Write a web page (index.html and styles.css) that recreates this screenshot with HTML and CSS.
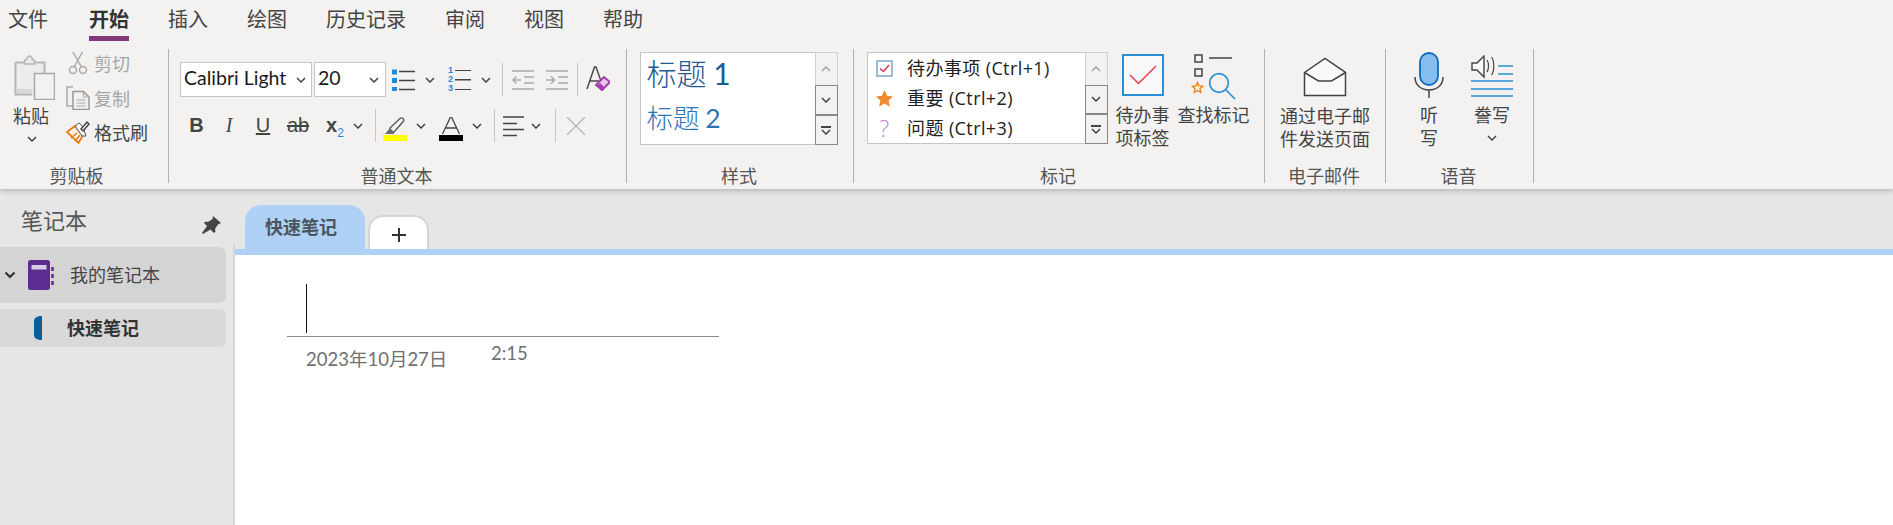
FILE: index.html
```html
<!DOCTYPE html>
<html lang="zh-CN">
<head>
<meta charset="utf-8">
<title>OneNote</title>
<link rel="stylesheet" href="styles.css">
</head>
<body>
<svg class="defs" width="0" height="0" aria-hidden="true">
  <defs>
    <symbol id="chev" viewBox="0 0 10 6"><polyline points="1,1 5,5 9,1" fill="none" stroke="#444" stroke-width="1.5"/></symbol>
    <symbol id="chev-bold" viewBox="0 0 12 8"><polyline points="1.500,1.500 6,6 10.500,1.500" fill="none" stroke="#333" stroke-width="2.200"/></symbol>
  </defs>
</svg>
<header class="top">
  <nav class="menu">
    <span class="menu-item first">文件</span>
    <span class="menu-item active">开始</span>
    <span class="menu-item">插入</span>
    <span class="menu-item">绘图</span>
    <span class="menu-item">历史记录</span>
    <span class="menu-item">审阅</span>
    <span class="menu-item">视图</span>
    <span class="menu-item">帮助</span>
  </nav>
  <div class="ribbon">
    <section class="group g-clip">
      <div class="content clip">
        <div class="paste">
          <svg class="paste-icon" width="41" height="45" viewBox="0 0 41 45">
            <rect x="2.500" y="8.500" width="27" height="30" fill="#ececec"/>
            <path d="M1.500 7.500h9.500M20.500 7.500h10v11M1.500 7.500v32h17" fill="none" stroke="#b5b5b5" stroke-width="2"/>
            <path d="M10.500 9V6c0-1 1-1.500 2-1.500 .5-2 1.500-3.500 3-3.500s2.500 1.500 3 3.500c1 0 2 .5 2 1.500v3z" fill="#ececec" stroke="#b5b5b5" stroke-width="1.500"/>
            <rect x="20.500" y="18.500" width="20" height="26" fill="#f3f2f1" stroke="#a8a8a8" stroke-width="1.500"/>
            <rect x="3" y="34" width="15" height="4" fill="#d8d8d8"/>
          </svg>
          <span class="paste-text">粘贴</span>
          <svg class="chev paste-chev"><use href="#chev"/></svg>
        </div>
        <div class="clip-list">
          <div class="clip-row disabled">
            <svg class="clip-icon" width="24" height="24" viewBox="0 0 24 24">
              <path d="M7 1l8.500 15M16.500 1L8 16" fill="none" stroke="#aaa" stroke-width="1.500"/>
              <circle cx="7" cy="19" r="3.500" fill="none" stroke="#aaa" stroke-width="1.500"/>
              <circle cx="17" cy="19" r="3.500" fill="none" stroke="#aaa" stroke-width="1.500"/>
            </svg>
            <span>剪切</span>
          </div>
          <div class="clip-row disabled">
            <svg class="clip-icon" width="24" height="24" viewBox="0 0 24 24">
              <path d="M7 1H1v19h6" fill="none" stroke="#aaa" stroke-width="1.500"/>
              <path d="M7 5.500v18h16V11l-5.500-5.500z" fill="#f3f2f1" stroke="#999" stroke-width="1.500"/>
              <path d="M17.500 5.500V11H23M10.500 14h9M10.500 17h9M10.500 20h9" fill="none" stroke="#aaa" stroke-width="1.200"/>
            </svg>
            <span>复制</span>
          </div>
          <div class="clip-row">
            <svg class="clip-icon" width="24" height="24" viewBox="0 0 24 24">
              <path d="M1 12l8-6 8 9-4.500 8z" fill="#fdf1e2" stroke="#e67e14" stroke-width="1.800"/>
              <path d="M5 18l6-5M9 21l5-6" stroke="#e67e14" stroke-width="1.500"/>
              <path d="M9 6l4-3 4 4 3 9-4 0z" fill="#fff" stroke="#444" stroke-width="1" opacity=".9"/>
              <path d="M15 9l6-7 2 2-6 7z" fill="#f3f2f1" stroke="#444" stroke-width="1.500"/>
            </svg>
            <span>格式刷</span>
          </div>
        </div>
      </div>
      <div class="label label-clip">剪贴板</div>
    </section>

    <section class="group g-text">
      <div class="content text-tools">
        <div class="row-one">
          <div class="select select-font"><span class="select-val">Calibri Light</span><svg class="chev"><use href="#chev"/></svg></div>
          <div class="select select-size"><span class="select-val">20</span><svg class="chev"><use href="#chev"/></svg></div>
          <svg class="ico bullets" width="23" height="22" viewBox="0 0 23 22">
            <path d="M7 2.500h16M7 11.500h16M7 20.500h16" stroke="#444" stroke-width="1.500"/>
            <rect x="0" y="0.500" width="5" height="5" fill="#1f8bd8"/><rect x="0" y="9" width="5" height="5" fill="#1f8bd8"/><rect x="0" y="18" width="5" height="4" fill="#1f8bd8"/>
          </svg>
          <svg class="chev c-bul"><use href="#chev"/></svg>
          <div class="num-list"><span class="digits"><b>1</b><b>2</b><b>3</b></span><span class="num-lines"></span></div>
          <svg class="chev c-num"><use href="#chev"/></svg>
          <i class="vsep sep-a"></i>
          <svg class="ico outdent" width="22" height="22" viewBox="0 0 22 22">
            <path d="M0 2h22M0 20h22M12 8h10M12 14h10" stroke="#aaa" stroke-width="1.500"/><path d="M9 11H1M4.500 7.500L1 11l3.500 3.500" fill="none" stroke="#aaa" stroke-width="1.500"/>
          </svg>
          <svg class="ico indent" width="22" height="22" viewBox="0 0 22 22">
            <path d="M0 2h22M0 20h22M12 8h10M12 14h10" stroke="#aaa" stroke-width="1.500"/><path d="M0 11h8M5 7.500L8.500 11 5 14.500" fill="none" stroke="#aaa" stroke-width="1.500"/>
          </svg>
          <i class="vsep sep-b"></i>
          <svg class="ico aerase" width="24" height="25" viewBox="0 0 24 25">
            <path d="M1 23L8.500 1h1.500L15 15M4 15h9" fill="none" stroke="#444" stroke-width="1.400"/>
            <path d="M10 19l8-8 6 5-8 8z" fill="#e6c7ea" stroke="#a33bb0" stroke-width="2"/><path d="M11 20l3-3 5 5-2 2z" fill="#a33bb0"/>
          </svg>
        </div>
        <div class="row-two">
          <span class="fmt fmt-b">B</span>
          <span class="fmt fmt-i">I</span>
          <span class="fmt fmt-u"><u>U</u></span>
          <span class="fmt fmt-s"><s>ab</s></span>
          <span class="fmt fmt-x">x<sub>2</sub></span>
          <svg class="chev c-x"><use href="#chev"/></svg>
          <i class="vsep sep-c"></i>
          <svg class="ico high" width="24" height="24" viewBox="0 0 24 24">
            <path d="M7 11L17 1.500c1-.8 2-.8 3 0s1 2 .2 3L11 15l-4 0z" fill="#f3f2f1" stroke="#555" stroke-width="1.300"/>
            <path d="M2 17l5-6 4 4v2z" fill="#6d6d6d"/>
            <rect x="0" y="18" width="24" height="6" fill="#ffff00"/>
          </svg>
          <svg class="chev c-hi"><use href="#chev"/></svg>
          <svg class="ico acolor" width="24" height="24" viewBox="0 0 24 24">
            <path d="M3.500 17L11.500 0h1L20.500 17M6.500 11h11" fill="none" stroke="#444" stroke-width="1.300"/>
            <rect x="0" y="18" width="24" height="6" fill="#000"/>
          </svg>
          <svg class="chev c-ac"><use href="#chev"/></svg>
          <i class="vsep sep-d"></i>
          <svg class="ico align" width="22" height="22" viewBox="0 0 22 22">
            <path d="M0 2h21M0 8.500h14M0 14.500h21M0 20.500h14" stroke="#444" stroke-width="1.500"/>
          </svg>
          <svg class="chev c-al"><use href="#chev"/></svg>
          <i class="vsep sep-e"></i>
          <svg class="ico clear" width="20" height="18" viewBox="0 0 20 18"><path d="M1 0l18 18M19 0L1 18" stroke="#bbb" stroke-width="1.500"/></svg>
        </div>
      </div>
      <div class="label label-text">普通文本</div>
    </section>

    <section class="group g-style">
      <div class="content gallery-wrap">
        <div class="gallery style-gallery">
          <div class="gallery-list">
            <div class="h1">标题 <b>1</b></div>
            <div class="h2">标题 <b>2</b></div>
          </div>
          <div class="gallery-scroll">
            <span class="sbtn up"><svg class="chev flip"><use href="#chev"/></svg></span>
            <span class="sbtn"><svg class="chev"><use href="#chev"/></svg></span>
            <span class="sbtn more"><i></i><svg class="chev"><use href="#chev"/></svg></span>
          </div>
        </div>
      </div>
      <div class="label">样式</div>
    </section>

    <section class="group g-tag">
      <div class="content tags">
        <div class="gallery tag-gallery">
          <div class="gallery-list tag-list">
            <div class="tag-row">
              <svg class="tag-ico" width="17" height="17" viewBox="0 0 17 17"><rect x="1" y="1" width="15" height="15" fill="#fff" stroke="#7fa9c9" stroke-width="1.500"/><path d="M4 8.500l3.500 3L13 5" fill="none" stroke="#d8344a" stroke-width="1.500"/></svg>
              <span>待办事项 (Ctrl+1)</span>
            </div>
            <div class="tag-row">
              <svg class="tag-ico" width="17" height="17" viewBox="0 0 17 17"><path d="M8.500 0l2.600 5.800 6 .7-4.500 4 1.300 6.200-5.400-3.100-5.400 3.100 1.300-6.200-4.500-4 6-.7z" fill="#f08a30"/></svg>
              <span>重要 (Ctrl+2)</span>
            </div>
            <div class="tag-row">
              <span class="tag-q">?</span>
              <span>问题 (Ctrl+3)</span>
            </div>
          </div>
          <div class="gallery-scroll">
            <span class="sbtn up"><svg class="chev flip"><use href="#chev"/></svg></span>
            <span class="sbtn"><svg class="chev"><use href="#chev"/></svg></span>
            <span class="sbtn more"><i></i><svg class="chev"><use href="#chev"/></svg></span>
          </div>
        </div>
        <div class="big big-todo">
          <svg width="42" height="42" viewBox="0 0 42 42"><rect x="1" y="1" width="40" height="40" fill="#f9f9f9" stroke="#2a8fd4" stroke-width="2"/><path d="M8 21l8.500 8.500L34 12" fill="none" stroke="#e83f4f" stroke-width="1.500"/></svg>
          <span class="big-text">待办事<br>项标签</span>
        </div>
        <div class="big big-find">
          <svg width="46" height="46" viewBox="0 0 46 46">
            <rect x="4" y="1" width="7" height="7" fill="none" stroke="#444" stroke-width="1.500"/>
            <rect x="4" y="15" width="7" height="7" fill="none" stroke="#444" stroke-width="1.500"/>
            <path d="M18 4h23" stroke="#444" stroke-width="1.500"/>
            <path d="M6.500 28.500l1.500 3.500 3.800.3-2.900 2.500.9 3.700-3.300-2-3.300 2 .9-3.700-2.900-2.500 3.800-.3z" fill="#fff4e5" stroke="#e67e14" stroke-width="1.300"/>
            <circle cx="28" cy="29" r="9.300" fill="none" stroke="#2a8fd4" stroke-width="1.700"/>
            <path d="M35 36l9 9" stroke="#2a8fd4" stroke-width="1.700"/>
          </svg>
          <span class="big-text">查找标记</span>
        </div>
      </div>
      <div class="label">标记</div>
    </section>

    <section class="group g-mail">
      <div class="content big-center">
        <div class="big">
          <svg width="44" height="40" viewBox="0 0 44 40"><path d="M1.500 15.500L22 1.500l20.500 14v23h-41z" fill="#fafafa" stroke="#444" stroke-width="1.500"/><path d="M1.500 15.500l14 8.500h13l14-8.500" fill="none" stroke="#444" stroke-width="1.500"/></svg>
          <span class="big-text">通过电子邮<br>件发送页面</span>
        </div>
      </div>
      <div class="label">电子邮件</div>
    </section>

    <section class="group g-voice">
      <div class="content voice">
        <div class="big big-mic">
          <svg width="30" height="46" viewBox="0 0 30 46">
            <rect x="6" y="1" width="18" height="32" rx="9" fill="#85bdee" stroke="#0f6cbd" stroke-width="1.800"/>
            <path d="M1 25c0 8 6 13 14 13s14-5 14-13M15 38v8" fill="none" stroke="#444" stroke-width="1.500"/>
          </svg>
          <span class="big-text">听<br>写</span>
        </div>
        <div class="big big-read">
          <svg width="42" height="42" viewBox="0 0 42 42">
            <path d="M1 8h5l7-7v21l-7-7H1z" fill="#f9f9f9" stroke="#444" stroke-width="1.400"/>
            <path d="M16 5c2 3 2 9 0 12M20.500 2c3 4 3 14 0 18" fill="none" stroke="#444" stroke-width="1.200"/>
            <path d="M27 11h15M27 19h15M0 26h42M0 34h42M0 41h42" stroke="#2a8fd4" stroke-width="1.600"/>
          </svg>
          <span class="big-text">誊写</span>
          <svg class="chev read-chev"><use href="#chev"/></svg>
        </div>
      </div>
      <div class="label">语音</div>
    </section>
  </div>
</header>

<main class="lower">
  <aside class="sidebar">
    <div class="side-head">
      <span class="side-title">笔记本</span>
      <svg class="pin" width="20" height="18" viewBox="0 0 20 18"><path d="M12 0l8 7-3 1.500-3 4.500 .5 2.500-1.500 1.500-3.500-3.500L2 18l-1-1 5-7-3-3 1.500-1.500 2.500.5 4.500-3z" fill="#444"/></svg>
    </div>
    <div class="side-list">
      <div class="nb">
        <svg class="nb-chev"><use href="#chev-bold"/></svg>
        <svg class="nb-ico" width="26" height="30" viewBox="0 0 26 30"><rect x="0" y="0" width="22" height="30" rx="2.500" fill="#5c2d91"/><rect x="3.500" y="5" width="15" height="4.500" fill="#d6cce3"/><path d="M24.500 7v4M24.500 14v4M24.500 21v4" stroke="#5c2d91" stroke-width="2.500"/></svg>
        <span>我的笔记本</span>
      </div>
      <div class="sec">
        <svg class="sec-ico" width="8" height="24" viewBox="0 0 8 24"><path d="M8 0C3 0 0 2 0 5v14c0 3 3 5 8 5z" fill="#0f5c96"/></svg>
        <span>快速笔记</span>
      </div>
    </div>
  </aside>
  <div class="main">
    <div class="tabs">
      <div class="tab">快速笔记</div>
      <div class="tab-add"><svg width="14" height="14" viewBox="0 0 14 14"><path d="M7 0v14M0 7h14" stroke="#333" stroke-width="2"/></svg></div>
    </div>
    <div class="tabbar"></div>
    <div class="page">
      <div class="title-box"><i class="cursor"></i></div>
      <div class="stamp">
        <span class="date">2023年10月27日</span>
        <span class="time">2:15</span>
      </div>
    </div>
  </div>
</main>
</body>
</html>
```

FILE: styles.css
```css
* { box-sizing: border-box; }
html, body { margin: 0; padding: 0; height: 525px; overflow: hidden; }
body {
  background: #e6e6e6;
  color: #444;
  font-family: "Noto Sans CJK SC", sans-serif;
  font-size: 18px;
}
.defs { display: block; height: 0; }
.top { background: #f3f2f1; height: 189px; position: relative; z-index: 2; box-shadow: 0 1px 6px rgba(0,0,0,.28); }

.menu { height: 49px; display: flex; align-items: flex-start; gap: 39px; padding-left: 8px; font-size: 20px; color: #444; }
.menu-item { height: 41px; line-height: 38px; }
.menu-item.first { margin-right: 2px; }
.menu-item.active { font-weight: 700; color: #333; border-bottom: 5px solid #80397b; }

.ribbon { display: flex; height: 134px; }
.group { display: flex; flex-direction: column; height: 134px; border-right: 1px solid #b3b0ad; flex: none; }
.content { flex: 1; min-height: 0; }
.label { height: 12px; line-height: 8px; text-align: center; color: #555; font-size: 18px; white-space: nowrap; padding-right: 2px; }
.label-clip { padding-right: 15px; }
.label-text { margin-left: -11px; }
.g-clip { width: 169px; }
.g-text { width: 458px; }
.g-style { width: 227px; }
.g-tag { width: 411px; }
.g-mail { width: 121px; }
.g-voice { width: 148px; }
.chev { width: 10px; height: 6px; display: block; flex: none; }
.flip { transform: scaleY(-1); }
.ico { display: block; flex: none; }

/* clipboard */
.clip { display: flex; padding: 6px 0 0 13px; }
.paste { width: 43px; display: flex; flex-direction: column; }
.paste-icon { margin-left: 1px; display: block; flex: none; }
.paste-text { width: 36px; line-height: 24px; margin-top: 3px; color: #444; }
.paste-chev { margin: 9px 0 0 14px; }
.clip-list { margin-left: 10px; margin-top: -9px; }
.clip-row { display: flex; align-items: center; height: 34.500px; gap: 4px; color: #444; white-space: nowrap; }
.clip-row.disabled { color: #a6a6a6; }
.clip-icon { flex: none; }

/* text tools */
.g-text { padding-left: 11px; }
.text-tools { padding-top: 13px; }
.row-one, .row-two { display: flex; align-items: center; }
.row-one { height: 35px; }
.row-two { height: 33px; margin-top: 12px; }
.select { height: 35px; border: 1.500px solid #c8c6c4; background: #fff; display: flex; align-items: center; justify-content: space-between; padding: 0 5px 0 3px; }
.select-font { width: 132px; }
.select-size { width: 72px; margin-left: 2px; padding-right: 6px; padding-left: 3px; }
.select-val { font-family: Lato, sans-serif; font-weight: 400; font-size: 19.500px; line-height: 24px; margin-top: -3px; color: #1a1a1a; white-space: nowrap; }
.vsep { display: block; width: 1px; background: #c8c6c4; flex: none; height: 33px; }
.bullets { margin-left: 6px; }
.c-bul { margin-left: 10px; }
.num-list { margin-left: 13px; display: flex; align-items: center; width: 23px; }
.digits { display: flex; flex-direction: column; width: 7px; color: #1f8bd8; font: 700 9px/9px "Liberation Sans", sans-serif; }
.digits b { display: block; }
.num-lines { width: 16px; height: 20px; border-top: 1.500px solid #444; border-bottom: 1.500px solid #444; background: linear-gradient(#444,#444) center / 100% 1.500px no-repeat; }
.c-num { margin-left: 10px; }
.sep-a { margin-left: 11px; }
.outdent { margin-left: 9px; }
.indent { margin-left: 12px; }
.sep-b { margin-left: 9px; }
.aerase { margin-left: 8px; margin-top: -3px; }

.fmt { display: block; flex: none; text-align: center; font-family: "Liberation Sans", sans-serif; font-size: 20px; color: #444; line-height: 33px; }
.fmt-b { width: 33px; font-weight: 700; }
.fmt-i { width: 32px; font-family: "Liberation Serif", serif; font-style: italic; }
.fmt-u { width: 36px; }
.fmt-s { width: 34px; }
.fmt-x { width: 36px; font-weight: 700; padding-left: 4px; }
.fmt-x sub { color: #1f8bd8; font-size: 12px; font-weight: 400; line-height: 0; }
.c-x { margin-left: 2px; }
.sep-c { margin-left: 12px; }
.high { margin-left: 7px; margin-top: 6px; }
.c-hi { margin-left: 9px; }
.acolor { margin-left: 13px; margin-top: 6px; }
.c-ac { margin-left: 9px; }
.sep-d { margin-left: 12px; }
.align { margin-left: 8px; }
.c-al { margin-left: 6px; }
.sep-e { margin-left: 14px; }
.clear { margin-left: 10px; }

/* galleries */
.gallery-wrap { padding: 3px 0 0 12.500px; }
.gallery { display: flex; height: 93px; }
.style-gallery { width: 198px; }
.gallery-list { flex: 1; background: #fff; border: 1.500px solid #c8c6c4; border-right: 0; }
.gallery-scroll { width: 23px; display: flex; flex-direction: column; flex: none; }
.sbtn { display: flex; flex-direction: column; align-items: center; justify-content: center; height: 30px; border: 1.500px solid #8a8886; background: #f3f2f1; }
.sbtn.up { height: 33px; border-color: #d2d0ce; border-bottom: 0; }
.sbtn.up .chev { opacity: .45; }
.sbtn.more i { display: block; width: 10px; height: 2px; background: #444; margin-bottom: 1px; }
.h1 { font-size: 30px; line-height: 38px; font-weight: 300; color: #1f5a93; padding: 0 0 0 6px; white-space: nowrap; }
.h2 { font-size: 26.500px; line-height: 36px; font-weight: 300; color: #2e75b6; padding: 7px 0 0 6px; white-space: nowrap; }
.h1 b, .h2 b { font-family: Lato, sans-serif; font-weight: 400; }

/* tags */
.tags { display: flex; padding: 3px 0 0 12.500px; }
.tag-gallery { width: 241px; height: 92px; flex: none; }
.tag-list { padding: 0 0 0 8.500px; }
.tag-row { display: flex; align-items: center; height: 30px; color: #222; font-family: "Open Sans", "Noto Sans CJK SC", sans-serif; font-size: 18px; letter-spacing: .4px; white-space: nowrap; }
.tag-row span { margin-top: -2px; margin-left: -1px; }
.tag-ico { flex: none; margin-right: 15px; }
.tag-row .tag-q { width: 17px; margin: 0 15px 0 0; text-align: center; color: #c586d6; font-size: 23px; font-weight: 300; line-height: 30px; }
.big { display: flex; flex-direction: column; align-items: center; flex: none; }
.big svg { display: block; flex: none; }
.big-text { line-height: 23px; text-align: center; color: #444; white-space: nowrap; }
.big-todo { width: 54px; margin-left: 8px; padding-top: 2px; }
.big-todo svg { margin-bottom: 7px; }
.big-find { width: 72px; margin-left: 8px; padding-top: 2px; }
.big-find svg { margin-bottom: 3px; }
.big-center { display: flex; justify-content: center; padding-top: 8px; }
.big-center .big svg { margin-bottom: 7px; }
.voice { display: flex; padding-top: 3px; }
.big-mic { width: 30px; margin-left: 28px; }
.big-mic svg { margin-bottom: 5px; }
.big-read { width: 42px; margin-left: 27px; padding-top: 3px; }
.big-read svg { margin-bottom: 6px; }
.read-chev { margin-top: 9px; }

/* lower */
.lower { display: flex; height: 336px; }
.sidebar { width: 235px; flex: none; display: flex; flex-direction: column; }
.side-head { height: 55px; display: flex; padding-left: 21px; align-items: flex-start; }
.side-title { font-size: 22px; line-height: 32px; margin-top: 14px; color: #555; }
.pin { margin: 27px 0 0 114px; }
.side-list { flex: 1; border-right: 2px solid #d6d6d6; padding-top: 3px; }
.nb { width: 226px; height: 56px; background: #d4d4d4; border-radius: 0 7px 7px 0; display: flex; align-items: center; color: #444; }
.nb-chev { margin-left: 4px; width: 12px; height: 8px; display: block; flex: none; }
.nb-ico { margin-left: 12px; flex: none; }
.nb span { margin-left: 16px; margin-top: -2px; }
.sec { width: 226px; height: 38px; margin-top: 6px; background: #d9d9d9; border-radius: 0 7px 7px 0; display: flex; align-items: center; color: #333; font-weight: 700; }
.sec-ico { margin-left: 34px; flex: none; }
.sec span { margin-left: 25px; margin-top: -3px; }

.main { flex: 1; min-width: 0; display: flex; flex-direction: column; }
.tabs { height: 60px; display: flex; align-items: flex-end; padding-left: 10px; }
.tab { width: 120px; height: 44px; background: #aed1f5; border-radius: 16px 16px 0 0; font-weight: 700; color: #4a5560; text-align: center; line-height: 43px; font-size: 18px; padding-right: 8px; }
.tab-add { width: 61px; height: 34px; margin-left: 3px; background: #fff; border: 2px solid #d4d4d4; border-bottom: 0; border-radius: 15px 15px 0 0; display: flex; align-items: center; justify-content: center; padding-top: 4px; }
.tabbar { height: 6px; background: #aed1f5; flex: none; }
.page { flex: 1; background: #fff; padding: 29px 0 0 52px; }
.title-box { width: 432px; height: 53px; border-bottom: 1px solid #8c8c8c; padding-left: 19px; }
.cursor { display: block; width: 1px; height: 49px; background: #111; }
.stamp { display: flex; align-items: flex-start; padding-left: 19px; color: #707070; font-family: Lato, "Noto Sans CJK SC", sans-serif; font-weight: 400; font-size: 18.500px; }
.date { width: 185px; line-height: 26px; margin-top: 9px; }
.time { line-height: 26px; margin-top: 3px; }
```
